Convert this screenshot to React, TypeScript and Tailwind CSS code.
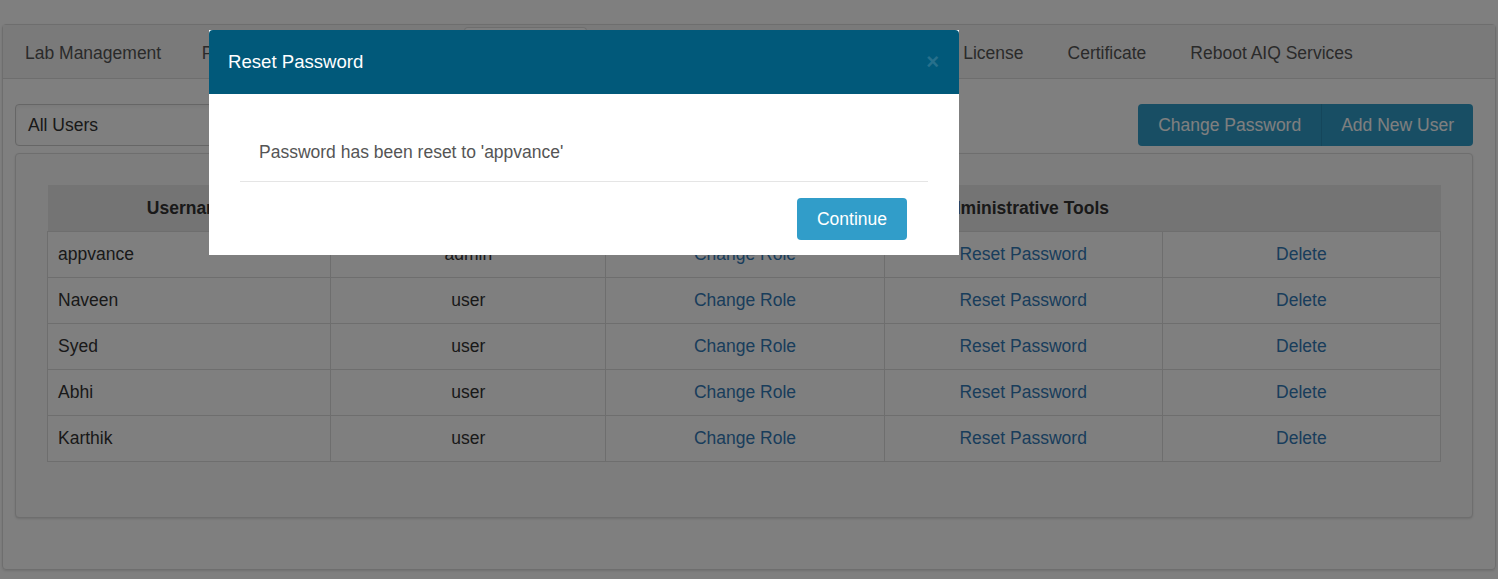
import React from "react";

const users = [
  { name: "appvance", role: "admin" },
  { name: "Naveen", role: "user" },
  { name: "Syed", role: "user" },
  { name: "Abhi", role: "user" },
  { name: "Karthik", role: "user" },
];

const tabs = [
  { label: "Lab Management", w: "" },
  { label: "Proxy Settings", w: "w-[150px]" },
  { label: "Email Setup", w: "w-[131px]" },
  { label: "Users", w: "w-[123px]", active: true },
  { label: "Data Sources", w: "w-[176px]" },
  { label: "Remote Agents", w: "w-[178px]" },
  { label: "License", w: "" },
  { label: "Certificate", w: "" },
  { label: "Reboot AIQ Services", w: "" },
];

const ResetModal: React.FC = () => {
  return (
    <div className="absolute left-[209px] top-[30px] w-[750px] bg-white">
      <div className="flex h-[64px] items-center justify-between rounded-t-[4px] bg-[#01597a] pl-[19px] pr-[20px]">
        <h4 className="text-[18.6px] text-white">Reset Password</h4>
        <button className="text-[22px] font-bold leading-none text-[#27708c]">×</button>
      </div>
      <div className="px-[31px]">
        <p className="pl-[19px] pt-[46px] pb-[17px] leading-[24px] text-[#555]">
          Password has been reset to 'appvance'
        </p>
        <div className="border-t border-[#e5e5e5]" />
        <div className="flex justify-end pb-[15px] pr-[21px] pt-[16px]">
          <button className="h-[42px] rounded-[4px] bg-[#319dc9] px-[20px] text-white">
            Continue
          </button>
        </div>
      </div>
    </div>
  );
};

export default function App() {
  return (
    <div className="relative h-[579px] w-full overflow-hidden bg-white font-['Liberation_Sans',Arial,sans-serif] text-[17.5px] text-[#333]">
      <div className="px-[2px] pt-[24px]">
        <div className="h-[546px] rounded-[4px] border border-[#dcdcdc] shadow-sm">
          <div className="flex h-[54px] items-end border-b border-[#ddd] bg-[#f5f5f5]">
            {tabs.map((t) => (
              <div
                key={t.label}
                className={
                  t.active
                    ? `-mb-px flex h-[52px] items-center justify-center whitespace-nowrap rounded-t-[4px] border border-[#ddd] border-b-white bg-white px-[21px] text-[#555] ${t.w}`
                    : `-mb-px flex h-[52px] items-center justify-center whitespace-nowrap border border-transparent px-[21px] text-[#555] ${t.w}`
                }
              >
                {t.label}
              </div>
            ))}
          </div>
          <div className="pl-[12px] pr-[22px] pt-[25px]">
            <div className="flex h-[42px] items-stretch justify-between">
              <div className="flex w-[360px] items-center rounded-[4px] border border-[#ccc] bg-white pl-[12px] shadow-inner">
                All Users
              </div>
              <div className="flex overflow-hidden rounded-[4px] bg-[#319dc9] text-white">
                <button className="border-r border-[#2b8db6] px-[20px]">Change Password</button>
                <button className="px-[19px]">Add New User</button>
              </div>
            </div>
            <div className="mt-[7px] h-[365px] rounded-[4px] border border-[#dcdcdc] bg-[#fbfbfb] px-[31px] pt-[31px] shadow-sm">
              <table className="w-full table-fixed border-collapse">
                <colgroup>
                  <col className="w-[283px]" />
                  <col className="w-[275px]" />
                  <col className="w-[278px]" />
                  <col className="w-[278px]" />
                  <col className="w-[278px]" />
                </colgroup>
                <thead>
                  <tr className="h-[46px] bg-[#e8e8e8]">
                    <th className="border-b border-[#ddd] font-bold">Username</th>
                    <th className="border-b border-[#ddd] font-bold">Role</th>
                    <th colSpan={3} className="border-b border-[#ddd] font-bold">
                      Administrative Tools
                    </th>
                  </tr>
                </thead>
                <tbody>
                  {users.map((u) => (
                    <tr key={u.name} className="h-[46px] bg-white">
                      <td className="border border-[#ddd] pl-[10px]">{u.name}</td>
                      <td className="border border-[#ddd] text-center">{u.role}</td>
                      <td className="border border-[#ddd] text-center text-[#337ab7]">Change Role</td>
                      <td className="border border-[#ddd] text-center text-[#337ab7]">Reset Password</td>
                      <td className="border border-[#ddd] text-center text-[#337ab7]">Delete</td>
                    </tr>
                  ))}
                </tbody>
              </table>
            </div>
          </div>
        </div>
      </div>
      <div className="absolute inset-0 bg-black/50" />
      <ResetModal />
    </div>
  );
}
